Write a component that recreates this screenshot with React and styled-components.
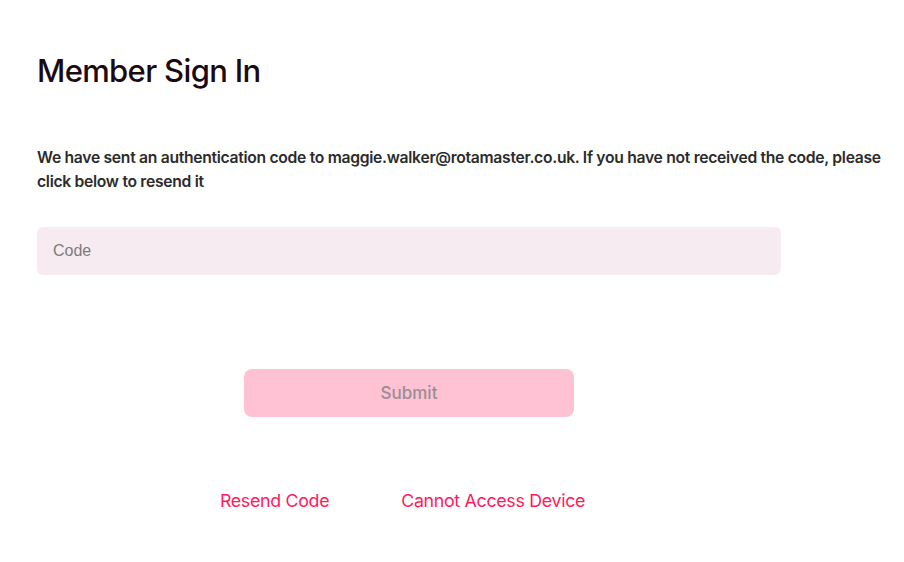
import React from 'react';
import styled, { createGlobalStyle } from 'styled-components';

const GlobalStyle = createGlobalStyle`
    html, body {
        margin: 0;
        padding: 0;
        background: #ffffff;
    }
    body {
        font-family: Inter, "Noto Sans", sans-serif;
    }
`

const Page = styled.div`
    padding: 49px 0 0 37px;
    width: 744px;
`

const Title = styled.h1`
    margin: 0;
    font-size: 31px;
    line-height: 44px;
    font-weight: 500;
    letter-spacing: -0.65px;
    color: #1c0a12;
`

const Message = styled.p`
    margin: 53px 0 0;
    width: 860px;
    font-size: 15.7px;
    line-height: 24px;
    font-weight: 600;
    letter-spacing: -0.3px;
    color: #2b2b2b;
`

const CodeInput = styled.input`
    display: block;
    box-sizing: border-box;
    width: 744px;
    height: 48px;
    margin-top: 33px;
    padding: 0 16px;
    border: none;
    border-radius: 6px;
    background: #f6ebf1;
    font-family: "Liberation Sans", Arial, sans-serif;
    font-size: 16px;
    color: #333;
    outline: none;

    &::placeholder {
        color: #7b7b7b;
    }
`

const ButtonRow = styled.div`
    display: flex;
    justify-content: center;
    margin-top: 94px;
`

const SubmitButton = styled.button`
    width: 330px;
    height: 48px;
    border: none;
    border-radius: 8px;
    background: #ffc2d4;
    color: #9a8d92;
    font-family: Inter, "Noto Sans", sans-serif;
    font-size: 17px;
    font-weight: 500;
    cursor: default;
`

const LinkRow = styled.div`
    display: flex;
    justify-content: center;
    gap: 72px;
    margin-top: 72px;
    padding-right: 13px;
`

const TextLink = styled.a`
    font-size: 17.8px;
    line-height: 24px;
    letter-spacing: -0.3px;
    color: #ff1a5c;
    text-decoration: none;
    cursor: pointer;
`

export default function App() {
    return (
        <>
            <GlobalStyle />
            <Page>
                <Title>Member Sign In</Title>
                <Message>
                    We have sent an authentication code to maggie.walker@rotamaster.co.uk. If you have not received the code, please click below to resend it
                </Message>
                <CodeInput placeholder="Code" />
                <ButtonRow>
                    <SubmitButton disabled>Submit</SubmitButton>
                </ButtonRow>
                <LinkRow>
                    <TextLink>Resend Code</TextLink>
                    <TextLink>Cannot Access Device</TextLink>
                </LinkRow>
            </Page>
        </>
    );
}
